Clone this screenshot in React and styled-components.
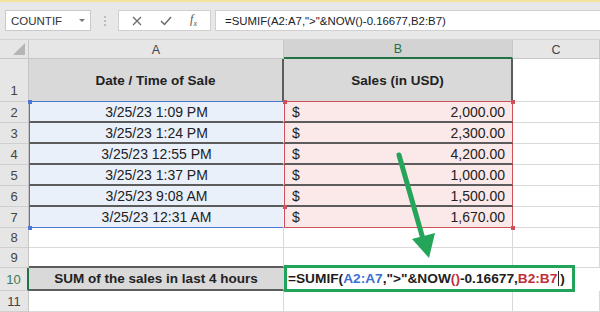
import React from 'react';
import styled, { createGlobalStyle, css } from 'styled-components';

const GlobalStyle = createGlobalStyle`
  html, body {
    margin: 0;
    padding: 0;
    background: #ffffff;
  }
  body {
    width: 600px;
    height: 312px;
    overflow: hidden;
    font-family: "Liberation Sans", Arial, sans-serif;
  }
`;

const BLUE = '#4a78d2';
const RED = '#d0505a';
const DARK = '#5c5c5c';
const GRID = '#d9d9d9';
const GREEN = '#217346';

const Page = styled.div`
  position: relative;
  width: 600px;
  height: 312px;
  overflow: hidden;
  background: #fff;
`;

const Toolbar = styled.div`
  height: 40px;
  box-sizing: border-box;
  border-top: 2px solid #f1e39c;
  border-bottom: 1px solid #d3d3d3;
  background: #e8e8e8;
  display: flex;
  align-items: center;
  padding: 0 0 0 5px;
  gap: 0;
`;

const NameBox = styled.div`
  width: 86px;
  height: 21px;
  box-sizing: border-box;
  background: #fff;
  border: 1px solid #c9c9c9;
  display: flex;
  align-items: center;
  justify-content: space-between;
  padding: 0 5px 0 5px;
  font-size: 11.5px;
  color: #333;
`;

const Caret = styled.span`
  width: 0;
  height: 0;
  border-left: 3px solid transparent;
  border-right: 3px solid transparent;
  border-top: 3px solid #777;
`;

const Grip = styled.div`
  width: 27px;
  display: flex;
  flex-direction: column;
  align-items: center;
  gap: 2px;
  span {
    width: 2px;
    height: 2px;
    background: #bdbdbd;
  }
`;

const FxBox = styled.div`
  width: 93px;
  height: 21px;
  box-sizing: border-box;
  background: #fff;
  border: 1px solid #d0d0d0;
  display: flex;
  align-items: center;
  justify-content: space-around;
  padding: 0 4px;
  margin-right: 4px;
`;

const FxLabel = styled.span`
  font-family: "Liberation Serif", serif;
  font-style: italic;
  font-size: 12px;
  color: #555;
  sub {
    font-size: 8px;
  }
`;

const FormulaInput = styled.div`
  flex: 1;
  height: 21px;
  box-sizing: border-box;
  background: #fff;
  border: 1px solid #d0d0d0;
  border-right: none;
  display: flex;
  align-items: center;
  padding-left: 9px;
  font-size: 11.4px;
  color: #222;
  white-space: nowrap;
`;

const Sheet = styled.div`
  display: grid;
  grid-template-columns: 29px 255px 229px 87px;
  grid-template-rows: 19px 43px repeat(6, 21px) 20px 20px 23px 21px;
  font-size: 14px;
  color: #222;
`;

const Corner = styled.div`
  background: #e6e6e6;
  border-right: 1px solid #c6c6c6;
  border-bottom: 1px solid #c6c6c6;
  box-sizing: border-box;
  position: relative;
  &::after {
    content: '';
    position: absolute;
    right: 3px;
    bottom: 3px;
    width: 0;
    height: 0;
    border-left: 12px solid transparent;
    border-bottom: 12px solid #b5b5b5;
  }
`;

const ColHead = styled.div`
  box-sizing: border-box;
  background: ${p => (p.$selected ? '#d3d3d3' : '#e6e6e6')};
  border-right: 1px solid #c6c6c6;
  border-bottom: ${p => (p.$selected ? `2px solid ${GREEN}` : '1px solid #c6c6c6')};
  color: ${p => (p.$selected ? GREEN : '#444')};
  font-size: 12.5px;
  display: flex;
  align-items: center;
  justify-content: center;
  padding-top: 1px;
`;

const RowHead = styled.div`
  box-sizing: border-box;
  background: #e6e6e6;
  border-bottom: 1px solid #cfcfcf;
  border-right: ${p => (p.$selected ? `2px solid ${GREEN}` : '1px solid #c6c6c6')};
  color: ${p => (p.$selected ? '#3d7a55' : '#444')};
  font-size: 13px;
  display: flex;
  align-items: ${p => (p.$tall ? 'flex-end' : 'center')};
  justify-content: center;
  padding-bottom: ${p => (p.$tall ? '3px' : '0')};
`;

const handle = color => css`
  content: '';
  position: absolute;
  width: 4px;
  height: 4px;
  background: ${color};
  z-index: 2;
`;

const Cell = styled.div`
  position: relative;
  box-sizing: border-box;
  background: ${p => p.$fill || '#fff'};
  border-right: ${p => p.$right || `1px solid ${GRID}`};
  border-bottom: ${p => p.$bottom || `1px solid ${GRID}`};
  border-left: ${p => p.$left || 'none'};
  font-weight: ${p => (p.$bold ? 700 : 400)};
  font-size: ${p => (p.$bold ? '13.5px' : '14px')};
  display: flex;
  align-items: center;
  justify-content: ${p => p.$justify || 'center'};
  padding: 0 7px;
  white-space: nowrap;
  ${p => p.$handleTL && css`&::before { ${handle(p.$handleTL)} left: -2px; top: -2px; }`}
  ${p => p.$handleTR && css`&::after { ${handle(p.$handleTR)} right: -3px; top: -2px; }`}
  ${p => p.$handleBL && css`&::before { ${handle(p.$handleBL)} left: -2px; bottom: -3px; }`}
  ${p => p.$handleBR && css`&::after { ${handle(p.$handleBR)} right: -3px; bottom: -3px; }`}
`;

const EditCell = styled.div`
  grid-column: span 2;
  position: relative;
  z-index: 3;
  margin-top: -3px;
  margin-bottom: -1px;
`;

const EditBox = styled.div`
  width: 291px;
  height: 100%;
  box-sizing: border-box;
  background: #fff;
  border: 3px solid #21a35a;
  display: flex;
  align-items: center;
  padding-left: 1px;
  font-size: 13.7px;
  font-weight: 700;
  color: #1e1e1e;
  white-space: nowrap;
`;

const Ref = styled.span`
  color: ${p => p.$color};
`;

const Cursor = styled.span`
  display: inline-block;
  width: 1px;
  height: 15px;
  background: #222;
  margin: 0 1px;
  vertical-align: middle;
`;

const ArrowLayer = styled.svg`
  position: absolute;
  left: 0;
  top: 0;
  pointer-events: none;
  z-index: 4;
`;

const sales = [
  ['3/25/23 1:09 PM', '2,000.00'],
  ['3/25/23 1:24 PM', '2,300.00'],
  ['3/25/23 12:55 PM', '4,200.00'],
  ['3/25/23 1:37 PM', '1,000.00'],
  ['3/25/23 9:08 AM', '1,500.00'],
  ['3/25/23 12:31 AM', '1,670.00'],
];

const FORMULA = '=SUMIF(A2:A7,">"&NOW()-0.16677,B2:B7)';

export default function App() {
  return (
    <Page>
      <GlobalStyle />
      <Toolbar>
        <NameBox>
          COUNTIF
          <Caret />
        </NameBox>
        <Grip>
          <span />
          <span />
          <span />
        </Grip>
        <FxBox>
          <svg width="10" height="10" viewBox="0 0 10 10">
            <path d="M1 1 L9 9 M9 1 L1 9" stroke="#6a6a6a" strokeWidth="1.3" />
          </svg>
          <svg width="12" height="10" viewBox="0 0 12 10">
            <path d="M1 5 L4.5 8.5 L11 1" stroke="#6a6a6a" strokeWidth="1.5" fill="none" />
          </svg>
          <FxLabel>
            f<sub>x</sub>
          </FxLabel>
        </FxBox>
        <FormulaInput>{FORMULA}</FormulaInput>
      </Toolbar>

      <Sheet>
        <Corner />
        <ColHead>A</ColHead>
        <ColHead $selected>B</ColHead>
        <ColHead>C</ColHead>

        <RowHead $tall>1</RowHead>
        <Cell $fill="#d9d9d9" $bold $right={`2px solid ${DARK}`} $bottom={`1px solid ${BLUE}`}>
          Date / Time of Sale
        </Cell>
        <Cell $fill="#d9d9d9" $bold $right={`2px solid ${DARK}`} $bottom={`1px solid ${RED}`}>
          Sales (in USD)
        </Cell>
        <Cell />

        {sales.map(([date, amount], i) => {
          const first = i === 0;
          const last = i === sales.length - 1;
          return (
            <React.Fragment key={date}>
              <RowHead>{i + 2}</RowHead>
              <Cell
                $fill="#e9f0fa"
                $right="1px solid #f4f4f4"
                $bottom={last ? `1px solid ${BLUE}` : `2px solid ${DARK}`}
                $left={`1px solid ${BLUE}`}
                $handleTL={first ? BLUE : undefined}
                $handleBL={last ? BLUE : undefined}
              >
                {date}
              </Cell>
              <Cell
                $fill="#fbe8e8"
                $justify="space-between"
                $left={`1px solid ${RED}`}
                $right={`1px solid ${RED}`}
                $bottom={last ? `1px solid ${RED}` : `2px solid ${DARK}`}
                $handleTL={first || last ? RED : undefined}
                $handleTR={first ? RED : undefined}
                $handleBR={last ? RED : undefined}
              >
                <span>$</span>
                <span>{amount}</span>
              </Cell>
              <Cell />
            </React.Fragment>
          );
        })}

        <RowHead>8</RowHead>
        <Cell />
        <Cell />
        <Cell />

        <RowHead>9</RowHead>
        <Cell $bottom={`2px solid ${DARK}`} />
        <Cell />
        <Cell />

        <RowHead $selected>10</RowHead>
        <Cell $fill="#d9d9d9" $bold $bottom={`2px solid ${DARK}`}>
          SUM of the sales in last 4 hours
        </Cell>
        <EditCell>
          <EditBox>
            =SUMIF(<Ref $color="#3b6fd4">A2:A7</Ref>,"&gt;"&amp;NOW
            <Ref $color="#c0303c">()</Ref>-0.16677,<Ref $color="#c0303c">B2:B7</Ref>
            <Cursor />)
          </EditBox>
        </EditCell>

        <RowHead>11</RowHead>
        <Cell />
        <Cell />
        <Cell />
      </Sheet>

      <ArrowLayer width="600" height="312" viewBox="0 0 600 312">
        <line x1="399" y1="155" x2="423" y2="239" stroke="#25a55a" strokeWidth="5" strokeLinecap="round" />
        <polygon points="429,258 412,239 435,233" fill="#25a55a" />
      </ArrowLayer>
    </Page>
  );
}
